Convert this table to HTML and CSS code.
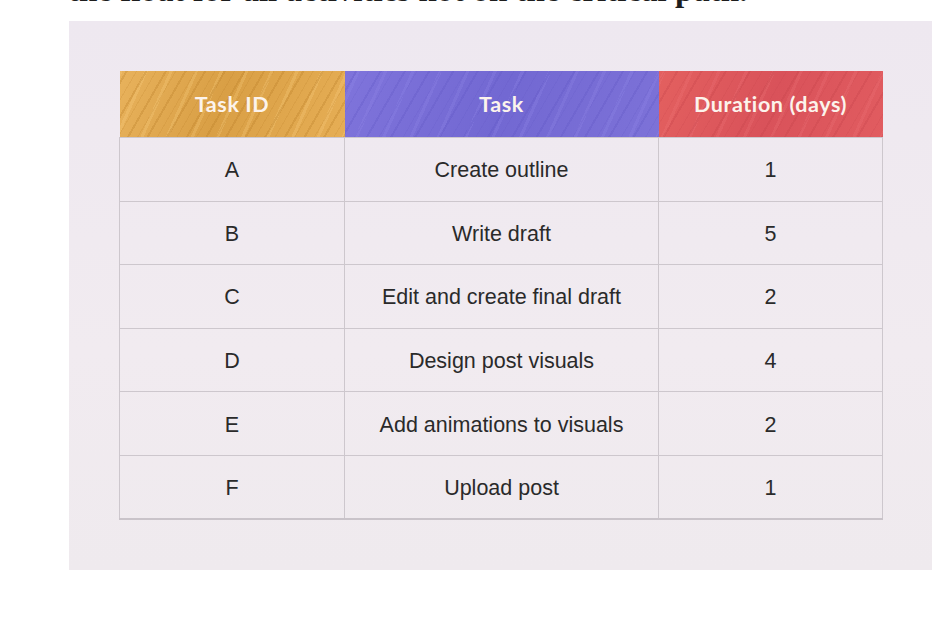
FILE: index.html
```html
<!DOCTYPE html>
<html lang="en">
<head>
<meta charset="utf-8">
<title>Critical path tasks</title>
<link rel="stylesheet" href="styles.css">
</head>
<body>
<p class="lead">the float for all activities not on the critical path.</p>
<div class="panel">
  <table class="tasks">
    <colgroup>
      <col class="c-id">
      <col class="c-task">
      <col class="c-dur">
    </colgroup>
    <thead>
      <tr>
        <th class="h-id">Task ID</th>
        <th class="h-task">Task</th>
        <th class="h-dur">Duration (days)</th>
      </tr>
    </thead>
    <tbody>
      <tr><td>A</td><td>Create outline</td><td>1</td></tr>
      <tr><td>B</td><td>Write draft</td><td>5</td></tr>
      <tr><td>C</td><td>Edit and create final draft</td><td>2</td></tr>
      <tr><td>D</td><td>Design post visuals</td><td>4</td></tr>
      <tr><td>E</td><td>Add animations to visuals</td><td>2</td></tr>
      <tr><td>F</td><td>Upload post</td><td>1</td></tr>
    </tbody>
  </table>
</div>
</body>
</html>
```

FILE: styles.css
```css
html, body {
  margin: 0;
  padding: 0;
  background: #ffffff;
}

body {
  width: 943px;
  height: 618px;
  overflow: hidden;
}

.lead {
  margin: -30px 0 0 68px;
  height: 51px;
  font-family: "Liberation Serif", "DejaVu Serif", serif;
  font-weight: bold;
  font-size: 33px;
  line-height: 40px;
  color: #1d1d1d;
  white-space: nowrap;
}

.panel {
  box-sizing: border-box;
  margin-left: 69px;
  width: 863px;
  height: 549px;
  padding: 50px 0 0 50px;
  background: linear-gradient(180deg, #eee8f0 0%, #f1ebf0 60%, #efeaee 100%);
}

.tasks {
  border-collapse: collapse;
  width: 763px;
  table-layout: fixed;
  font-family: "Liberation Sans", Arial, sans-serif;
  color: #2a2a2a;
}

.c-id { width: 225px; }
.c-task { width: 314px; }
.c-dur { width: 224px; }

.tasks th {
  height: 66px;
  padding: 0;
  font-family: "Lato", "Open Sans", sans-serif;
  font-weight: 700;
  font-size: 21.5px;
  letter-spacing: 0.6px;
  color: #fcf3ec;
  text-align: center;
  vertical-align: middle;
  border: none;
}

.h-id {
  background-color: #e2a84f;
  background-image:
    repeating-linear-gradient(-60deg, rgba(185, 125, 38, 0.30) 0 2px, transparent 2px 9px, rgba(185, 125, 38, 0.18) 9px 10px, transparent 10px 17px),
    repeating-linear-gradient(-66deg, rgba(255, 215, 140, 0.22) 0 3px, transparent 3px 23px),
    linear-gradient(110deg, #e8b25c 0%, #d99f45 45%, #e6ae55 100%);
}

.h-task {
  background-color: #7a70d6;
  background-image:
    repeating-linear-gradient(-60deg, rgba(95, 85, 195, 0.28) 0 2px, transparent 2px 11px, rgba(95, 85, 195, 0.16) 11px 12px, transparent 12px 21px),
    repeating-linear-gradient(-66deg, rgba(150, 140, 235, 0.22) 0 3px, transparent 3px 25px),
    linear-gradient(110deg, #7f74db 0%, #7268d2 50%, #7d72d8 100%);
}

.h-dur {
  background-color: #df5a5f;
  background-image:
    repeating-linear-gradient(-60deg, rgba(195, 65, 72, 0.28) 0 2px, transparent 2px 11px, rgba(195, 65, 72, 0.16) 11px 12px, transparent 12px 21px),
    repeating-linear-gradient(-66deg, rgba(240, 120, 125, 0.22) 0 3px, transparent 3px 25px),
    linear-gradient(110deg, #e3605f 0%, #d9525a 50%, #e15c60 100%);
}

.tasks td {
  box-sizing: border-box;
  height: 63.6px;
  padding: 3px 0 0;
  font-size: 21.5px;
  text-align: center;
  vertical-align: middle;
  border: 1px solid #cdc7cd;
  background: transparent;
}

.tasks tbody tr:last-child td {
  border-bottom: 2px solid #c9c3c9;
}
```
